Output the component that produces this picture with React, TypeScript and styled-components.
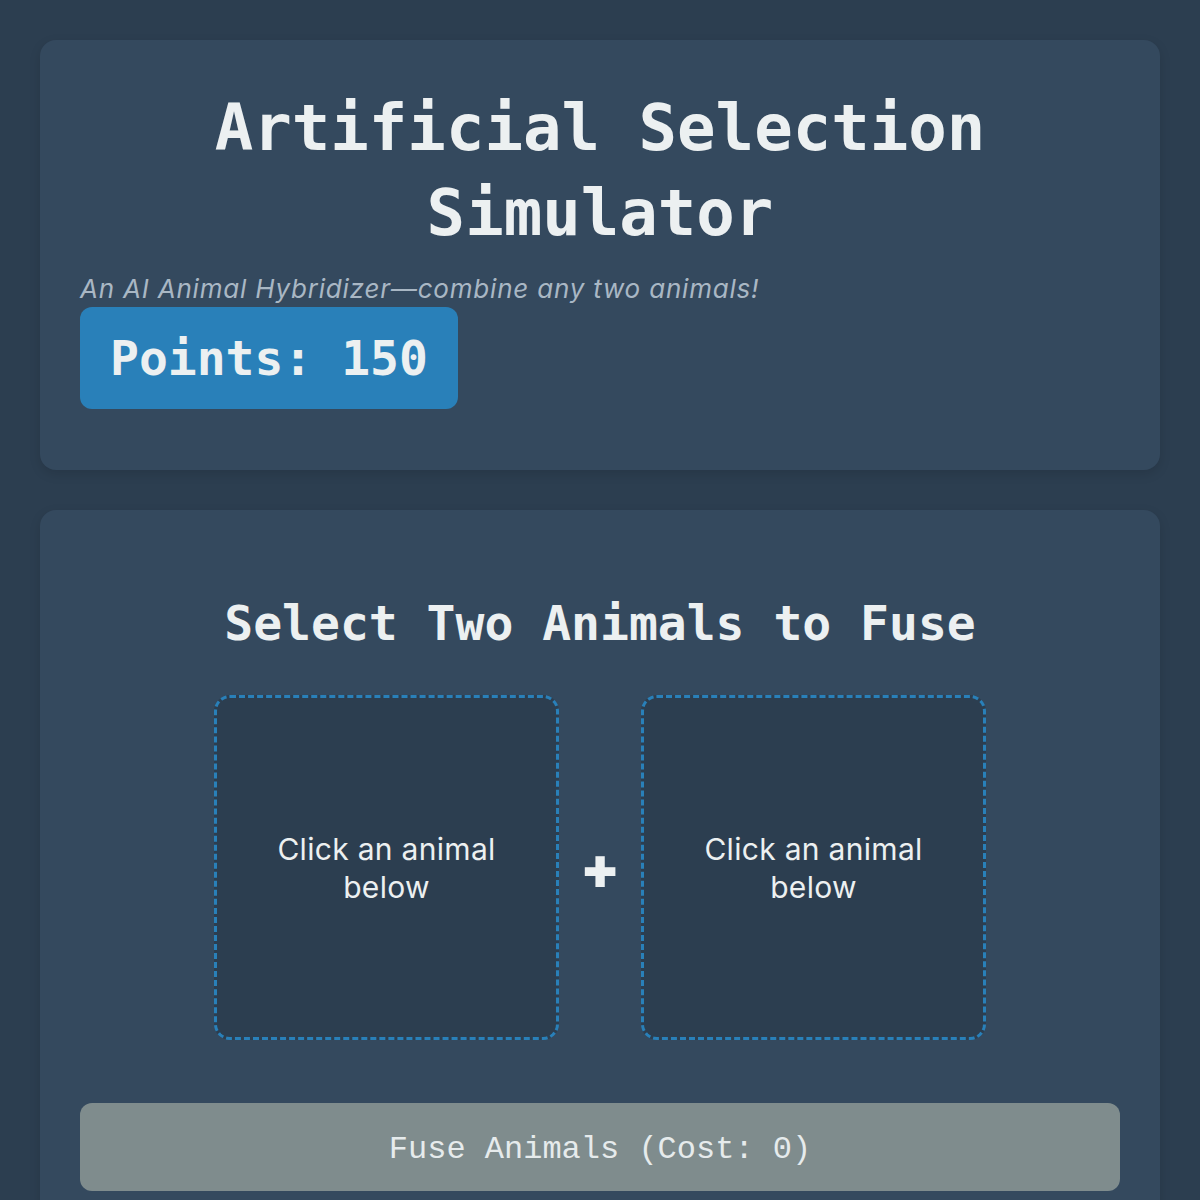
import React from "react";
import styled, { createGlobalStyle } from "styled-components";

const GlobalStyle = createGlobalStyle`
  body {
    margin: 0;
    background: #2c3e50;
    color: #ecf0f1;
    font-family: "Inter", "Open Sans", sans-serif;
  }
`;

const Page = styled.div`
  padding: 40px;
  display: flex;
  flex-direction: column;
  gap: 40px;
`;

const Card = styled.section`
  background: #34495e;
  border-radius: 16px;
  padding: 40px;
  box-shadow: 0 4px 12px rgba(0, 0, 0, 0.12);
`;

const Title = styled.h1`
  margin: 6px 0 0;
  text-align: center;
  font-family: "DejaVu Sans Mono", monospace;
  font-weight: 700;
  font-size: 64px;
  line-height: 85px;
  color: #ecf0f1;
`;

const Subtitle = styled.p`
  margin: 16px 0 0;
  font-style: italic;
  font-size: 26px;
  line-height: 34px;
  color: #a9b7c4;
  letter-spacing: 0.8px;
`;

const Points = styled.div`
  display: inline-block;
  margin: 1px 0 21px;
  padding: 20px 30px;
  border-radius: 12px;
  background: #2980b9;
  font-family: "DejaVu Sans Mono", monospace;
  font-weight: 700;
  font-size: 48px;
  line-height: 62px;
  color: #ecf0f1;
`;

const Heading = styled.h2`
  margin: 45px 0 44px;
  text-align: center;
  font-family: "DejaVu Sans Mono", monospace;
  font-weight: 700;
  font-size: 48px;
  line-height: 56px;
  color: #ecf0f1;
`;

const SlotRow = styled.div`
  display: flex;
  justify-content: center;
  align-items: center;
  gap: 24px;
`;

const Slot = styled.div`
  box-sizing: border-box;
  width: 345px;
  height: 345px;
  border: 3px dashed #2980b9;
  border-radius: 16px;
  background: #2c3e50;
  display: flex;
  align-items: center;
  justify-content: center;
  padding: 0 36px;
  text-align: center;
  font-size: 30px;
  line-height: 38px;
  letter-spacing: 0.3px;
  color: #ecf0f1;
`;

const Plus = styled.span`
  width: 34px;
  display: flex;
  justify-content: center;
  font-family: "Inter", sans-serif;
  font-weight: 900;
  font-size: 58px;
  line-height: 1;
  color: #ecf0f1;
`;

const FuseButton = styled.button`
  display: block;
  width: 100%;
  margin-top: 63px;
  padding: 28px 0 22px;
  border: none;
  border-radius: 12px;
  background: #7f8c8d;
  font-family: "Liberation Mono", "DejaVu Sans Mono", monospace;
  font-size: 32px;
  line-height: 38px;
  color: #e6ebec;
  cursor: not-allowed;
`;

const slots = ["Click an animal below", "Click an animal below"];

export default function App() {
  return (
    <>
      <GlobalStyle />
      <Page>
        <Card>
          <Title>Artificial Selection Simulator</Title>
          <Subtitle>An AI Animal Hybridizer—combine any two animals!</Subtitle>
          <Points>Points: 150</Points>
        </Card>
        <Card>
          <Heading>Select Two Animals to Fuse</Heading>
          <SlotRow>
            <Slot>{slots[0]}</Slot>
            <Plus>+</Plus>
            <Slot>{slots[1]}</Slot>
          </SlotRow>
          <FuseButton disabled>Fuse Animals (Cost: 0)</FuseButton>
        </Card>
      </Page>
    </>
  );
}
